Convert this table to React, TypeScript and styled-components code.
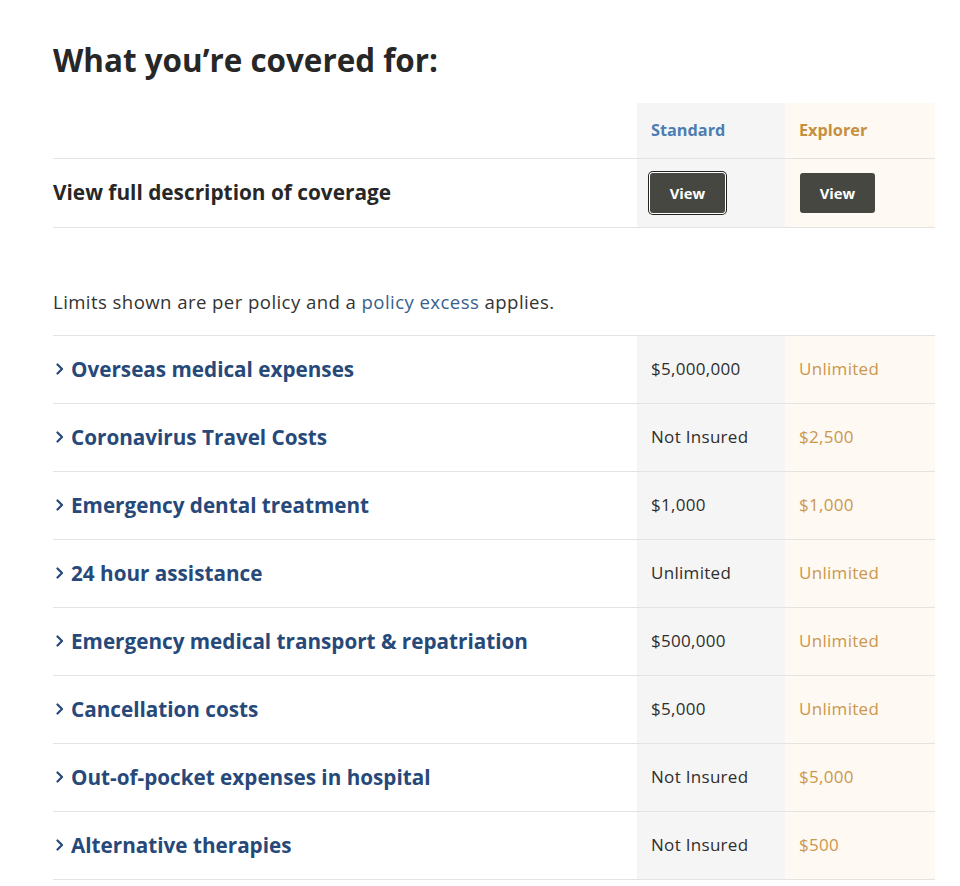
import React from "react";
import styled, { createGlobalStyle } from "styled-components";

const Global = createGlobalStyle`
  html, body { margin: 0; padding: 0; background: #ffffff; }
  body { font-family: "Open Sans", "Lato", sans-serif; color: #2a2a2a; }
`;

const Page = styled.div`
  padding: 40px 25px 0 53px;
  width: 882px;
`;

const Title = styled.h1`
  margin: 0 0 23px 0;
  font-size: 31.4px;
  line-height: 40px;
  font-weight: 700;
  color: #272727;
`;

const Row = styled.div<{ $top?: boolean }>`
  display: grid;
  grid-template-columns: 584px 148px 150px;
  border-bottom: 1px solid #e4e3e2;
  ${(p) => (p.$top ? "border-top: 1px solid #e4e3e2;" : "")}
`;

const LabelCell = styled.div<{ $h: number }>`
  height: ${(p) => p.$h}px;
  display: flex;
  align-items: center;
`;

const StdCell = styled.div<{ $h: number }>`
  height: ${(p) => p.$h}px;
  display: flex;
  align-items: center;
  padding-left: 14px;
  background: #f6f5f5;
`;

const ExpCell = styled(StdCell)`
  background: #fff9f3;
`;

const PlanName = styled.span<{ $color: string }>`
  font-size: 16.3px;
  font-weight: 700;
  color: ${(p) => p.$color};
  margin-top: -2px;
`;

const RowTitle = styled.span`
  font-size: 20.8px;
  font-weight: 700;
  color: #272727;
  margin-top: -2px;
`;

const ViewButton = styled.button<{ $focused?: boolean }>`
  width: 75px;
  height: 40px;
  border: 0;
  border-radius: 3px;
  background: #464741;
  color: #ffffff;
  font-family: inherit;
  font-size: 14.8px;
  font-weight: 700;
  cursor: pointer;
  ${(p) =>
    p.$focused
      ? "box-shadow: 0 0 0 1px #ffffff, 0 0 0 2px #222222; margin-left: -1px;"
      : "margin-left: 1px;"}
`;

const Note = styled.p`
  margin: 62px 0 21px 0;
  font-size: 18.6px;
  line-height: 24px;
  color: #333333;
  letter-spacing: 0.42px;
`;

const Link = styled.a`
  color: #3a5f8c;
  text-decoration: none;
`;

const Benefit = styled.span`
  display: flex;
  align-items: center;
  gap: 7px;
  font-size: 20.7px;
  font-weight: 700;
  color: #27497a;
  margin-top: -2px;
`;

const Chevron = styled.svg`
  width: 8px;
  height: 12px;
  margin-left: 3px;
  flex: none;
`;

const Value = styled.span<{ $gold?: boolean }>`
  font-size: 17px;
  letter-spacing: 0.3px;
  color: ${(p) => (p.$gold ? "#c9974e" : "#2e2e2e")};
  margin-top: -2px;
`;

const rows: [string, string, string][] = [
  ["Overseas medical expenses", "$5,000,000", "Unlimited"],
  ["Coronavirus Travel Costs", "Not Insured", "$2,500"],
  ["Emergency dental treatment", "$1,000", "$1,000"],
  ["24 hour assistance", "Unlimited", "Unlimited"],
  ["Emergency medical transport & repatriation", "$500,000", "Unlimited"],
  ["Cancellation costs", "$5,000", "Unlimited"],
  ["Out-of-pocket expenses in hospital", "Not Insured", "$5,000"],
  ["Alternative therapies", "Not Insured", "$500"],
];

export default function App() {
  return (
    <>
      <Global />
      <Page>
        <Title>What you’re covered for:</Title>
        <Row>
          <LabelCell $h={55} />
          <StdCell $h={55}>
            <PlanName $color="#4d7db2">Standard</PlanName>
          </StdCell>
          <ExpCell $h={55}>
            <PlanName $color="#c68f3f">Explorer</PlanName>
          </ExpCell>
        </Row>
        <Row>
          <LabelCell $h={68}>
            <RowTitle>View full description of coverage</RowTitle>
          </LabelCell>
          <StdCell $h={68}>
            <ViewButton $focused>View</ViewButton>
          </StdCell>
          <ExpCell $h={68}>
            <ViewButton>View</ViewButton>
          </ExpCell>
        </Row>
        <Note>
          Limits shown are per policy and a <Link href="#">policy excess</Link> applies.
        </Note>
        {rows.map(([label, std, exp], i) => (
          <Row key={label} $top={i === 0}>
            <LabelCell $h={67}>
              <Benefit>
                <Chevron viewBox="0 0 8 12">
                  <path d="M1.5 1.5 L6 6 L1.5 10.5" fill="none" stroke="#27497a" strokeWidth="2.2" strokeLinecap="round" strokeLinejoin="round" />
                </Chevron>
                {label}
              </Benefit>
            </LabelCell>
            <StdCell $h={67}>
              <Value>{std}</Value>
            </StdCell>
            <ExpCell $h={67}>
              <Value $gold>{exp}</Value>
            </ExpCell>
          </Row>
        ))}
      </Page>
    </>
  );
}
